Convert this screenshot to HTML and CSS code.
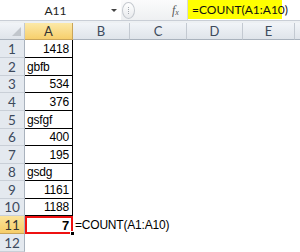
FILE: index.html
```html
<!DOCTYPE html>
<html>
<head>
<meta charset="utf-8">
<link rel="stylesheet" href="styles.css">
</head>
<body>
<div class="app">
  <div class="topbar">
    <div class="namebox">
      <span class="ref">A11</span>
      <span class="arrow"></span>
    </div>
    <div class="mid">
      <span class="knob"><span class="dots"></span></span>
      <span class="fx">f<sub>x</sub></span>
    </div>
    <div class="formula">=COUNT(A1:A10)</div>
    <div class="rest"></div>
  </div>
  <div class="band"></div>
  <div class="sheet">
    <div class="hd corner"><span class="tri"></span></div>
    <div class="hd col sel">A</div>
    <div class="hd col">B</div>
    <div class="hd col">C</div>
    <div class="hd col">D</div>
    <div class="hd col">E</div>
    <div class="hd col last"></div>

    <div class="rh">1</div><div class="a num">1418</div><div></div><div></div><div></div><div></div><div></div>
    <div class="rh">2</div><div class="a">gbfb</div><div></div><div></div><div></div><div></div><div></div>
    <div class="rh">3</div><div class="a num">534</div><div></div><div></div><div></div><div></div><div></div>
    <div class="rh">4</div><div class="a num">376</div><div></div><div></div><div></div><div></div><div></div>
    <div class="rh">5</div><div class="a">gsfgf</div><div></div><div></div><div></div><div></div><div></div>
    <div class="rh">6</div><div class="a num">400</div><div></div><div></div><div></div><div></div><div></div>
    <div class="rh">7</div><div class="a num">195</div><div></div><div></div><div></div><div></div><div></div>
    <div class="rh">8</div><div class="a">gsdg</div><div></div><div></div><div></div><div></div><div></div>
    <div class="rh">9</div><div class="a num">1161</div><div></div><div></div><div></div><div></div><div></div>
    <div class="rh">10</div><div class="a num">1188</div><div></div><div></div><div></div><div></div><div></div>
    <div class="rh rsel">11</div><div class="active num"><b>7</b><span class="handle"></span></div><div class="overflow">=COUNT(A1:A10)</div><div></div><div></div><div></div><div></div>
    <div class="rh">12</div><div></div><div></div><div></div><div></div><div></div><div></div>
  </div>
</div>
</body>
</html>
```
FILE: styles.css
```css
* { box-sizing: border-box; }
html, body { margin: 0; padding: 0; background: #fff; }
body { font-family: Lato, "Liberation Sans", sans-serif; width: 300px; height: 252px; overflow: hidden; }

.app { width: 300px; }

.topbar {
  display: flex;
  height: 21px;
  border-bottom: 1px solid #c9ced6;
  background: #fff;
}
.namebox {
  width: 121px;
  position: relative;
  display: flex;
  align-items: center;
  justify-content: center;
  font-size: 12px;
  color: #222;
  padding-right: 10px;
}
.arrow {
  position: absolute;
  right: 4px;
  top: 9px;
  width: 0; height: 0;
  border-left: 3px solid transparent;
  border-right: 3px solid transparent;
  border-top: 3px solid #444;
}
.mid {
  width: 67px;
  display: flex;
  align-items: center;
  background: linear-gradient(#fbfbfc, #eef0f2);
  border-right: 1px solid #d6d9de;
}
.knob {
  width: 13px; height: 17px;
  margin-left: 1px;
  border: 1px solid #c4c8ce;
  border-radius: 50%;
  background: linear-gradient(#ffffff, #e8eaed);
  display: flex;
  align-items: center;
  justify-content: center;
}
.dots {
  width: 2px; height: 7px;
  border-left: 1px dotted #a3a8af;
}
.fx {
  margin-left: 37px;
  font-family: "Liberation Serif", serif;
  font-style: italic;
  font-size: 12px;
  color: #555;
}
.fx sub { font-size: 8px; vertical-align: -1px; }
.formula {
  width: 94px;
  height: 19px;
  background: #ffff00;
  font-size: 12px;
  line-height: 19px;
  padding-left: 4px;
  color: #111;
  white-space: nowrap;
}
.rest { flex: 1; }

.band { height: 2px; background: #edf0f3; }

.sheet {
  display: grid;
  grid-template-columns: 25px 48px 57px 57px 56px 52px 1fr;
  grid-template-rows: 17px 18px 18px 17px 18px 18px 17px 18px 17px 18px 17px 18px 18px;
  font-family: "Liberation Sans", Arial, sans-serif;
  font-size: 12px;
  letter-spacing: -0.2px;
}
.hd {
  background: linear-gradient(#f1f4f8, #dfe4ea);
  border-right: 1px solid #c3c9d1;
  border-bottom: 1px solid #a9b2bd;
  color: #3d4a5c;
  display: flex;
  align-items: center;
  justify-content: center;
  font-family: Lato, "Liberation Sans", sans-serif;
  font-size: 13px;
  letter-spacing: 0;
}
.corner { position: relative; }
.tri {
  position: absolute;
  right: 3px; bottom: 3px;
  width: 0; height: 0;
  border-left: 9px solid transparent;
  border-bottom: 9px solid #c1c6cc;
}
.col.sel {
  background: linear-gradient(#fce9a8, #f7cf6c);
  color: #333;
  border-right-color: #c9a458;
  border-bottom-color: #c9a458;
}
.col.last { border-right: none; }
.rh {
  background: #e4e9ef;
  border-right: 1px solid #a9b2bd;
  border-bottom: 1px solid #c9cfd7;
  color: #3d4a5c;
  display: flex;
  align-items: center;
  justify-content: center;
  font-family: Lato, "Liberation Sans", sans-serif;
  font-size: 13.5px;
  letter-spacing: 0;
}
.rh.rsel {
  background: linear-gradient(#fbe39a, #f6cd68);
  color: #333;
  border-bottom-color: #c9a458;
}
.a {
  border-right: 1px solid #000;
  border-bottom: 1px solid #000;
  display: flex;
  align-items: center;
  padding: 0 3px 0 2px;
  color: #000;
  white-space: nowrap;
}
.num { justify-content: flex-end; }
.active {
  position: relative;
  border: 2px solid #ee1111;
  display: flex;
  align-items: center;
  padding: 0 2px;
  color: #000;
}
.active b { font-weight: 700; font-size: 13px; }
.handle {
  position: absolute;
  right: -4px; bottom: -4px;
  width: 5px; height: 5px;
  background: #000;
  border: 1px solid #fff;
}
.overflow {
  display: flex;
  align-items: center;
  padding-left: 2px;
  white-space: nowrap;
  overflow: visible;
  color: #000;
}
```
